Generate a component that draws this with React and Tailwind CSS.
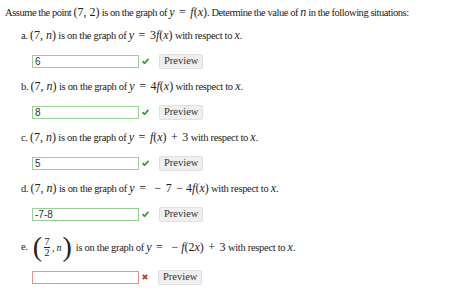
import React from "react";

const I = ({ children }) => <span className="italic">{children}</span>;
const Op = ({ children }) => <span className="mx-[4.5px]">{children}</span>;
const M = ({ children }) => <span className="text-[12px] tracking-normal">{children}</span>;

function Check() {
  return (
    <svg width="7" height="6" viewBox="0 0 7 6" className="ml-[3px]">
      <path d="M0.5 3.2 L2.6 5.3 L6.5 0.8" stroke="#3c9a3c" strokeWidth="1.8" fill="none" />
    </svg>
  );
}

function Cross() {
  return (
    <svg width="6" height="6" viewBox="0 0 6 6" className="ml-[3px]">
      <path d="M0.8 0.8 L5.2 5.2 M5.2 0.8 L0.8 5.2" stroke="#c0392b" strokeWidth="1.8" />
    </svg>
  );
}

function AnswerRow({ value, ok }) {
  return (
    <div className="flex items-center h-[16px] ml-[11px]">
      <div
        className={
          "w-[107px] h-[13px] border flex items-center pl-[2px] text-[10px] tracking-normal text-[#333] font-['Liberation_Sans',Arial,sans-serif] " +
          (ok ? "border-[#95d495]" : "border-[#e29090]")
        }
      >
        {value}
      </div>
      {ok ? <Check /> : <Cross />}
      <div className="ml-[10px] h-[15px] px-[4px] flex items-center bg-[#efefef] border border-[#e0e0e0] rounded-[2px] text-[10.5px] tracking-normal text-[#333]">
        Preview
      </div>
    </div>
  );
}

const Pt = () => (
  <M>
    (7,<span className="ml-[3px]" />
    <I>n</I>)
  </M>
);

export default function App() {
  const items = [
    {
      label: "a.",
      eq: (
        <>
          3<I>f</I>(<I>x</I>)
        </>
      ),
      value: "6",
    },
    {
      label: "b.",
      eq: (
        <>
          4<I>f</I>(<I>x</I>)
        </>
      ),
      value: "8",
    },
    {
      label: "c.",
      eq: (
        <>
          <I>f</I>(<I>x</I>)<Op>+</Op>3
        </>
      ),
      value: "5",
    },
    {
      label: "d.",
      eq: (
        <>
          <span className="ml-[4px]" />&minus;<Op>7</Op>&minus;<span className="ml-[3px]">4</span>
          <I>f</I>(<I>x</I>)
        </>
      ),
      value: "-7-8",
    },
  ];

  return (
    <div className="w-[474px] h-[298px] bg-white text-[10.5px] tracking-[-0.3px] text-[#222] pl-[5px] pt-[4px] overflow-hidden font-['Liberation_Serif','Times_New_Roman',serif]">
      <div className="h-[16px] leading-[16px] whitespace-nowrap tracking-[-0.45px]">
        Assume the point{" "}
        <M>
          (7,<span className="ml-[3px]" />2)
        </M>{" "}
        is on the graph of{" "}
        <M>
          <I>y</I>
          <Op>=</Op>
          <I>f</I>(<I>x</I>)
        </M>
        . Determine the value of <M><I>n</I></M> in the following situations:
      </div>
      <div className="ml-[16px] mt-[7px] flex flex-col">
        {items.map((it) => (
          <div key={it.label} className="mb-[9px]">
            <div className="h-[16px] leading-[16px] whitespace-nowrap">
              {it.label} <Pt /> is on the graph of{" "}
              <M>
                <I>y</I>
                <Op>=</Op>
                {it.eq}
              </M>{" "}
              with respect to <M><I>x</I></M>.
            </div>
            <div className="mt-[10px]">
              <AnswerRow value={it.value} ok />
            </div>
          </div>
        ))}
        <div>
          <div className="h-[32px] flex items-center whitespace-nowrap">
            <span>e.</span>
            <span className="ml-[5px] text-[28px] leading-none tracking-normal">(</span>
            <span className="inline-flex flex-col items-center text-[10px] leading-[10px] mx-[2px] tracking-normal">
              <span>7</span>
              <span className="w-[6px] border-t border-[#222]" />
              <span>2</span>
            </span>
            <span className="text-[10px] tracking-normal">
              ,<span className="ml-[2px]" />
              <I>n</I>
            </span>
            <span className="ml-[1px] text-[28px] leading-none tracking-normal">)</span>
            <span className="ml-[4px]">
              is on the graph of{" "}
              <M>
                <I>y</I>
                <Op>=</Op>
                <span className="ml-[4px]" />&minus;<span className="ml-[3px]" />
                <I>f</I>(2<I>x</I>)<Op>+</Op>3
              </M>{" "}
              with respect to <M><I>x</I></M>.
            </span>
          </div>
          <div className="mt-[6px]">
            <AnswerRow value="" ok={false} />
          </div>
        </div>
      </div>
    </div>
  );
}
